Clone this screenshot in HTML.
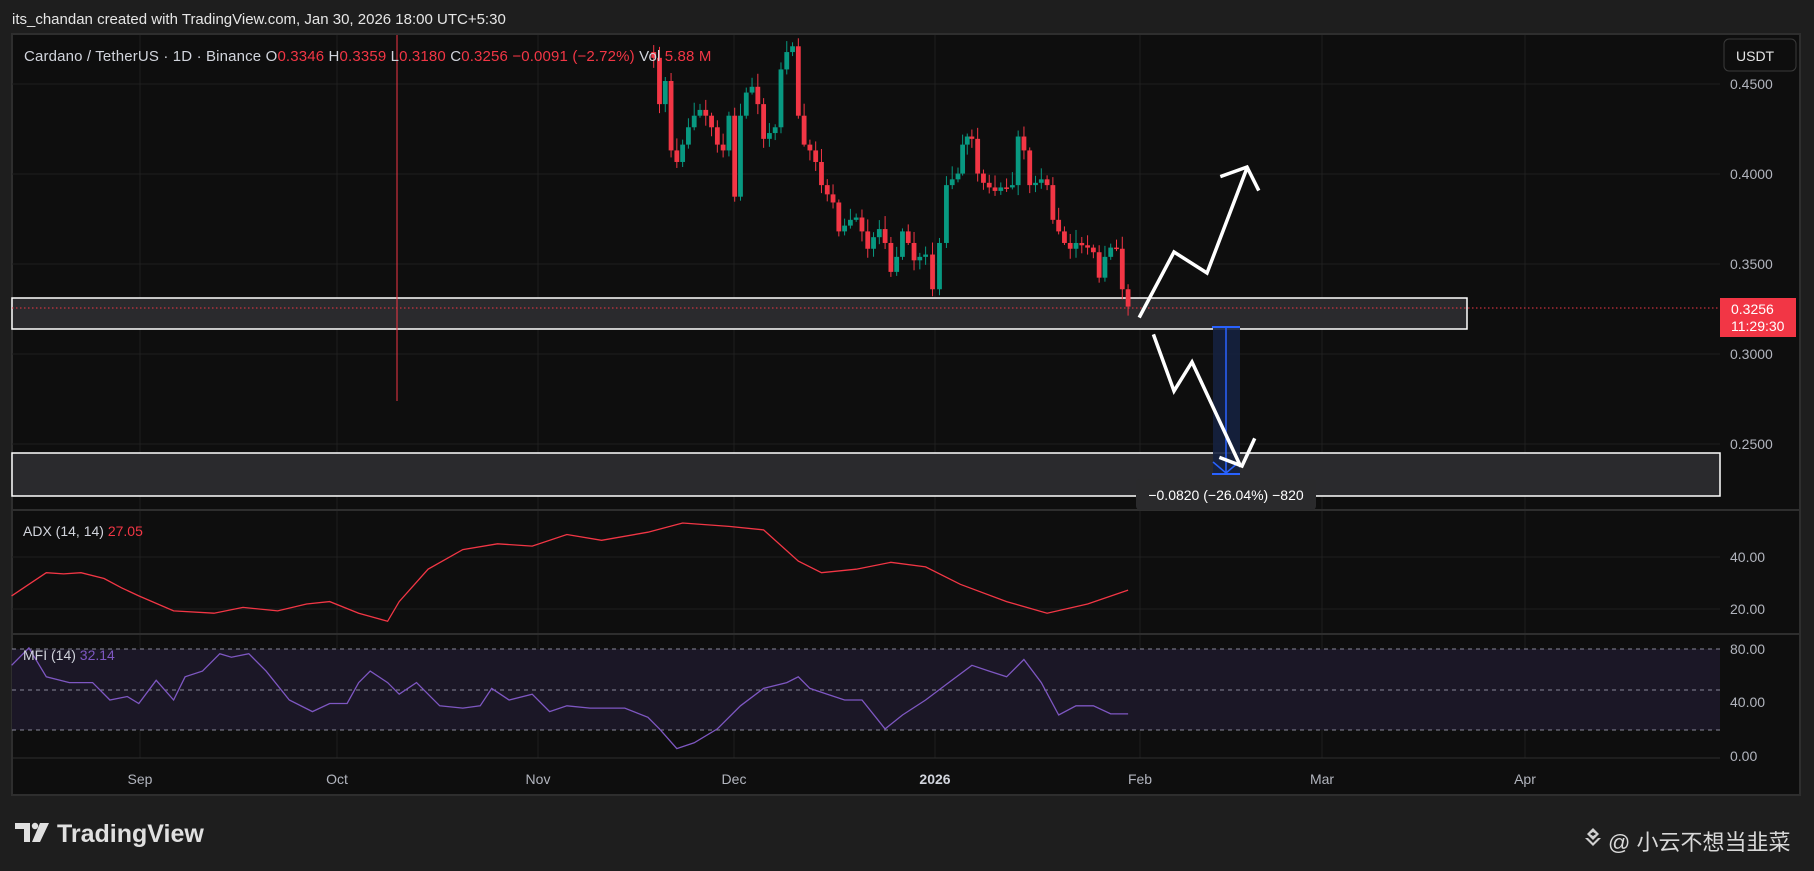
<!DOCTYPE html>
<html><head><meta charset="utf-8"><style>
html,body{margin:0;padding:0;width:1814px;height:871px;background:#1e1e1e;overflow:hidden;font-family:"Liberation Sans",sans-serif}
svg{display:block}
text{font-family:"Liberation Sans","Noto Sans CJK SC",sans-serif}
</style></head><body>
<svg id="s" width="1814" height="871" xmlns="http://www.w3.org/2000/svg">
<rect width="1814" height="871" fill="#1e1e1e"/>
<text x="12" y="24" fill="#e6e6e6" font-size="15">its_chandan created with TradingView.com, Jan 30, 2026 18:00 UTC+5:30</text>
<rect x="12" y="34" width="1788" height="761" fill="#0e0e0e" stroke="#2e2e2e" stroke-width="2"/>
<g id="grid" stroke="#1f1f1f" stroke-width="1"></g>
<line x1="12" y1="510" x2="1800" y2="510" stroke="#2e2e2e" stroke-width="2"/>
<line x1="12" y1="634" x2="1800" y2="634" stroke="#2e2e2e" stroke-width="2"/>
<line x1="12" y1="758" x2="1720" y2="758" stroke="#2e2e2e" stroke-width="1"/>
<rect x="12" y="298" width="1455" height="31" fill="#2a2a2d" stroke="#ffffff" stroke-width="1.5"/>
<rect x="12" y="453" width="1708" height="43" fill="#2a2a2d" stroke="#ffffff" stroke-width="1.5"/>
<line x1="397" y1="35" x2="397" y2="401" stroke="#f23645" stroke-width="1"/>
<line x1="12" y1="308" x2="1720" y2="308" stroke="#f23645" stroke-width="1" stroke-dasharray="1.5,2.5"/>
<g id="candles"></g>
<rect x="1213" y="327" width="27" height="148" fill="#15213f" opacity="0.9"/>
<line x1="1212" y1="327" x2="1240" y2="327" stroke="#2962ff" stroke-width="2"/>
<line x1="1212" y1="474" x2="1240" y2="474" stroke="#2962ff" stroke-width="2"/>
<line x1="1226" y1="327" x2="1226" y2="473" stroke="#2962ff" stroke-width="1.5"/>
<path d="M1213 462 L1226 473 L1239 462" fill="none" stroke="#2962ff" stroke-width="1.5"/>
<g fill="none" stroke="#fff" stroke-width="3.5" stroke-linejoin="miter" stroke-linecap="square">
<path d="M1140 316 L1174 252 L1207 273 L1247 168"/>
<path d="M1222 176 L1247 167 L1258 189"/>
<path d="M1154 336 L1174 391 L1192 362 L1240 465"/>
<path d="M1221 458 L1242 466 L1254 440"/>
</g>
<rect x="1136" y="479" width="180" height="31" rx="4" fill="#2a2a2c"/>
<text x="1226" y="500" fill="#fff" font-size="14" text-anchor="middle">−0.0820 (−26.04%) −820</text>
<rect x="12" y="649" width="1708" height="81" fill="#1b1726"/>
<g stroke="#8a8a9a" stroke-width="1" stroke-dasharray="4,4">
<line x1="12" y1="649" x2="1720" y2="649"/><line x1="12" y1="690" x2="1720" y2="690"/><line x1="12" y1="730" x2="1720" y2="730"/>
</g>
<path id="adx" fill="none" stroke="#f23645" stroke-width="1.3"/>
<path id="mfi" fill="none" stroke="#7e57c2" stroke-width="1.3"/>
<text x="24" y="61" fill="#d1d4dc" font-size="15" letter-spacing="0.15">Cardano / TetherUS · 1D · Binance  <tspan>O</tspan><tspan fill="#f23645">0.3346</tspan>  H<tspan fill="#f23645">0.3359</tspan>  L<tspan fill="#f23645">0.3180</tspan>  C<tspan fill="#f23645">0.3256  −0.0091 (−2.72%)</tspan>  Vol <tspan fill="#f23645">5.88 M</tspan></text>
<text x="23" y="536" fill="#d1d4dc" font-size="14">ADX (14, 14) <tspan fill="#f23645">27.05</tspan></text>
<text x="23" y="660" fill="#d1d4dc" font-size="14">MFI (14) <tspan fill="#7e57c2">32.14</tspan></text>
<rect x="1724" y="39" width="72" height="32" rx="5" fill="#0e0e0e" stroke="#3a3a3a"/>
<text x="1736" y="61" fill="#e6e6e6" font-size="14">USDT</text>
<g fill="#b2b5be" font-size="14">
<text x="1730" y="89">0.4500</text><text x="1730" y="179">0.4000</text><text x="1730" y="269">0.3500</text><text x="1730" y="359">0.3000</text><text x="1730" y="449">0.2500</text>
<text x="1730" y="562">40.00</text><text x="1730" y="614">20.00</text>
<text x="1730" y="654">80.00</text><text x="1730" y="707">40.00</text><text x="1730" y="761">0.00</text>
</g>
<rect x="1720" y="298" width="76" height="39" fill="#f23645"/>
<text x="1731" y="314" fill="#fff" font-size="14">0.3256</text>
<text x="1731" y="331" fill="#fff" font-size="14">11:29:30</text>
<g fill="#b2b5be" font-size="14" text-anchor="middle">
<text x="140" y="784">Sep</text><text x="337" y="784">Oct</text><text x="538" y="784">Nov</text><text x="734" y="784">Dec</text><text x="935" y="784" font-weight="bold" fill="#d1d4dc">2026</text><text x="1140" y="784">Feb</text><text x="1322" y="784">Mar</text><text x="1525" y="784">Apr</text>
</g>
<g fill="#e0e0e0">
<path d="M15 823 h15 v19 h-6 v-13 h-9z"/><circle cx="35" cy="826" r="3.2"/><path d="M40 823 h9 l-9 19 h-8z"/>
</g>
<text x="57" y="842" fill="#e0e0e0" font-size="25" font-weight="bold">TradingView</text>
<g fill="#d0d0d0" transform="translate(1593,842)"><path d="M0 -14 L6 -8 L0 -2 L-6 -8Z M-7 -8 L-3 -4 M0 -6 L3 -8 L0 -10 L-3 -8Z"/><path d="M-8 -4 L0 4 L8 -4 L5 -4 L0 1 L-5 -4Z"/></g>
<text x="1608" y="850" fill="#d8d8d8" font-size="22">@ 小云不想当韭菜</text>
</svg>
<script>
var k=1.157,NS="http://www.w3.org/2000/svg",s=document.getElementById('s');
function el(p,t,a){var e=document.createElementNS(NS,t);for(var n in a)e.setAttribute(n,a[n]);p.appendChild(e);return e}
var g=document.getElementById('grid');
[84,174,264,354,444].forEach(function(y){el(g,'line',{x1:12,y1:y,x2:1720,y2:y})});
[557,609,702].forEach(function(y){el(g,'line',{x1:12,y1:y,x2:1720,y2:y})});
[140,337,538,734,935,1140,1322,1525].forEach(function(x){el(g,'line',{x1:x,y1:35,x2:x,y2:758})});
var pts=[[560,45],[565,50],[570,90],[575,70],[580,130],[585,140],[590,125],[595,110],[600,100],[605,95],[610,100],[615,110],[620,125],[625,130],[630,100],[635,170],[640,100],[645,80],[650,75],[655,90],[660,120],[665,115],[670,110],[675,60],[680,45],[685,40],[690,100],[695,125],[700,130],[705,140],[710,160],[715,168],[720,175],[725,200],[730,195],[735,190],[740,188],[745,200],[750,215],[755,205],[760,198],[765,210],[770,235],[775,222],[780,200],[785,210],[790,225],[795,222],[800,220],[806,250],[812,210],[818,160],[823,155],[828,150],[832,125],[836,118],[840,120],[845,150],[850,158],[855,162],[860,165],[865,162],[870,162],[875,160],[880,118],[885,130],[890,160],[895,158],[900,155],[905,160],[910,190],[915,200],[920,210],[925,215],[930,210],[935,212],[940,214],[945,218],[950,240],[955,222],[960,214],[965,215],[970,250],[975,265]];
var c=document.getElementById('candles');
for(var i=1;i<pts.length;i++){var x=pts[i][0]*k,o=pts[i-1][1]*k,cl=pts[i][1]*k;var up=cl<o;var col=up?'#089981':'#f23645';
var t=Math.min(o,cl),b=Math.max(o,cl);if(b-t<1.5)b=t+1.5;var w=((i*37)%11)+3;
el(c,'line',{x1:x,y1:t-w,x2:x,y2:b+((i*53)%9)+2,stroke:col,'stroke-width':1});
el(c,'rect',{x:x-2.4,y:t,width:4.8,height:b-t,fill:col});}
function path(id,a){var d='';a.forEach(function(p,j){d+=(j?'L':'M')+(p[0]*k).toFixed(1)+' '+(p[1]*k).toFixed(1)});document.getElementById(id).setAttribute('d',d)}
path('adx',[[10,515],[25,505],[40,495],[55,496],[70,495],[90,500],[105,508],[120,515],[150,528],[185,530],[210,525],[240,528],[265,522],[285,520],[310,530],[335,537],[345,520],[370,492],[400,475],[430,470],[460,472],[490,462],[520,467],[560,460],[590,452],[630,455],[660,458],[690,485],[710,495],[740,492],[770,486],[800,490],[830,505],[870,520],[905,530],[940,522],[975,510]]);
path('mfi',[[10,575],[25,560],[40,585],[60,590],[80,590],[95,605],[110,602],[120,608],[135,588],[150,605],[160,585],[175,580],[190,565],[200,568],[215,565],[230,580],[250,605],[270,615],[285,608],[300,608],[310,590],[320,580],[335,590],[345,600],[360,590],[380,610],[400,612],[415,610],[425,595],[440,605],[460,600],[475,615],[490,610],[510,612],[540,612],[560,620],[570,630],[585,647],[600,642],[620,630],[640,610],[660,595],[680,590],[690,585],[700,595],[715,600],[730,605],[745,605],[765,630],[780,618],[800,605],[820,590],[840,575],[855,580],[870,585],[885,570],[900,590],[915,618],[930,610],[945,610],[960,617],[975,617]]);
</script>
</body></html>
